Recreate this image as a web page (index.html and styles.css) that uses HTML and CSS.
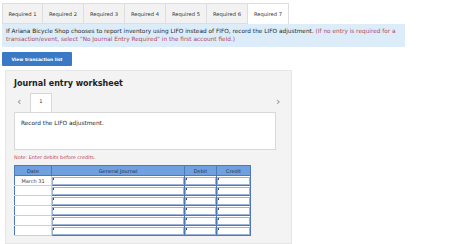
FILE: index.html
```html
<!DOCTYPE html>
<html>
<head>
<meta charset="utf-8">
<link rel="stylesheet" href="styles.css">
</head>
<body>
<div class="tabs">
  <div class="tab">Required 1</div>
  <div class="tab">Required 2</div>
  <div class="tab">Required 3</div>
  <div class="tab">Required 4</div>
  <div class="tab">Required 5</div>
  <div class="tab">Required 6</div>
  <div class="tab active">Required 7</div>
</div>
<div class="info">If Ariana Bicycle Shop chooses to report inventory using LIFO instead of FIFO, record the LIFO adjustment. <span class="hint">(If no entry is required for a transaction/event, select "No Journal Entry Required" in the first account field.)</span></div>
<div class="btn">View transaction list</div>
<div class="panel">
  <div class="title">Journal entry worksheet</div>
  <div class="nav">
    <span class="arrow">&lsaquo;</span>
    <span class="pg">1</span>
    <span class="spacer"></span>
    <span class="arrow right">&rsaquo;</span>
  </div>
  <div class="record">Record the LIFO adjustment.</div>
  <div class="note">Note: Enter debits before credits.</div>
  <table class="jt">
    <thead>
      <tr><th class="c-date">Date</th><th class="c-gj">General Journal</th><th class="c-dr">Debit</th><th class="c-cr">Credit</th></tr>
    </thead>
    <tbody>
      <tr><td class="date">March 31</td><td class="in"><div class="inp"></div></td><td class="in"><div class="inp"></div></td><td class="in"><div class="inp"></div></td></tr>
      <tr><td class="date"></td><td class="in"><div class="inp"></div></td><td class="in"><div class="inp"></div></td><td class="in"><div class="inp"></div></td></tr>
      <tr><td class="date"></td><td class="in"><div class="inp"></div></td><td class="in"><div class="inp"></div></td><td class="in"><div class="inp"></div></td></tr>
      <tr><td class="date"></td><td class="in"><div class="inp"></div></td><td class="in"><div class="inp"></div></td><td class="in"><div class="inp"></div></td></tr>
      <tr><td class="date"></td><td class="in"><div class="inp"></div></td><td class="in"><div class="inp"></div></td><td class="in"><div class="inp"></div></td></tr>
      <tr><td class="date"></td><td class="in"><div class="inp"></div></td><td class="in"><div class="inp"></div></td><td class="in"><div class="inp"></div></td></tr>
    </tbody>
  </table>
</div>
</body>
</html>
```
FILE: styles.css
```css
html, body {
  margin: 0;
  padding: 0;
  background: #ffffff;
  font-family: "DejaVu Sans", Verdana, sans-serif;
  color: #333333;
}
body {
  width: 474px;
  height: 244px;
  overflow: hidden;
}
.tabs {
  display: flex;
  margin: 3px 0 0 2px;
  height: 21px;
}
.tab {
  width: 41px;
  box-sizing: border-box;
  border: 1px solid #dedede;
  border-left: none;
  background: #f2f2f2;
  font-size: 5.2px;
  color: #333333;
  display: flex;
  align-items: center;
  justify-content: center;
}
.tab:first-child {
  border-left: 1px solid #dedede;
}
.tab.active {
  background: #ffffff;
  border-bottom: none;
}
.info {
  width: 403px;
  box-sizing: border-box;
  margin-left: 2px;
  background: #dcedf9;
  padding: 3px 4px 0 4px;
  font-size: 5.8px;
  line-height: 8px;
  color: #2a2a2a;
  height: 23px;
}
.hint {
  color: #b04a63;
}
.btn {
  margin: 5px 0 0 2px;
  width: 70px;
  height: 14px;
  background: #3a79c6;
  color: #ffffff;
  font-size: 4.4px;
  font-weight: bold;
  display: flex;
  align-items: center;
  justify-content: center;
  border-radius: 1px;
}
.panel {
  margin: 4px 0 0 5px;
  width: 287px;
  height: 174px;
  box-sizing: border-box;
  background: #f3f3f3;
  border: 1px solid #e6e6e6;
  padding: 0 0 0 8px;
}
.title {
  font-size: 8px;
  font-weight: bold;
  color: #1e1e1e;
  margin-top: 8px;
  height: 10px;
  line-height: 10px;
}
.nav {
  display: flex;
  align-items: flex-end;
  margin-top: 4px;
  height: 19px;
  width: 270px;
}
.arrow {
  font-size: 11px;
  color: #888888;
  width: 16px;
  padding-left: 3px;
  height: 19px;
  line-height: 17px;
  box-sizing: border-box;
}
.arrow.right {
  width: 8px;
  padding-left: 0;
}
.pg {
  width: 22px;
  height: 19px;
  box-sizing: border-box;
  background: #ffffff;
  border: 1px solid #d8d8d8;
  border-bottom: none;
  font-size: 5.2px;
  text-align: center;
  line-height: 14px;
  color: #333333;
}
.spacer {
  flex: 1;
}
.record {
  width: 262px;
  height: 38px;
  box-sizing: border-box;
  background: #ffffff;
  border: 1px solid #d8d8d8;
  font-size: 5.8px;
  padding: 7px 6px;
  color: #2a2a2a;
}
.note {
  font-size: 4.9px;
  color: #c1445a;
  margin-top: 3px;
  height: 8px;
  line-height: 8px;
}
.jt {
  margin-top: 4px;
  border-collapse: collapse;
  table-layout: fixed;
  width: 236px;
  border: 1px solid #4f79b4;
}
.jt th {
  background: #6fa0df;
  color: #22324d;
  font-size: 5px;
  font-weight: normal;
  height: 10px;
  padding: 0;
  border: 1px solid #4f79b4;
  box-sizing: border-box;
}
.c-date { width: 37px; }
.c-gj { width: 133px; }
.c-dr { width: 32px; }
.c-cr { width: 34px; }
.jt td {
  height: 10px;
  padding: 0;
  box-sizing: border-box;
}
.jt td.date {
  background: #ffffff;
  border: 1px solid #cfcfcf;
  border-left: 1px solid #4f79b4;
  font-size: 5px;
  text-align: center;
  color: #444444;
}
.jt td.in {
  border: 1px solid #4f79b4;
  background: #ffffff;
}
.inp {
  position: relative;
  height: 8px;
  box-sizing: border-box;
  border: 1px solid #9bb3d6;
  background: #ffffff;
}
.inp::before {
  content: "";
  position: absolute;
  left: 0;
  top: 0;
  width: 1px;
  height: 2px;
  background: #2d4c7c;
}
```
